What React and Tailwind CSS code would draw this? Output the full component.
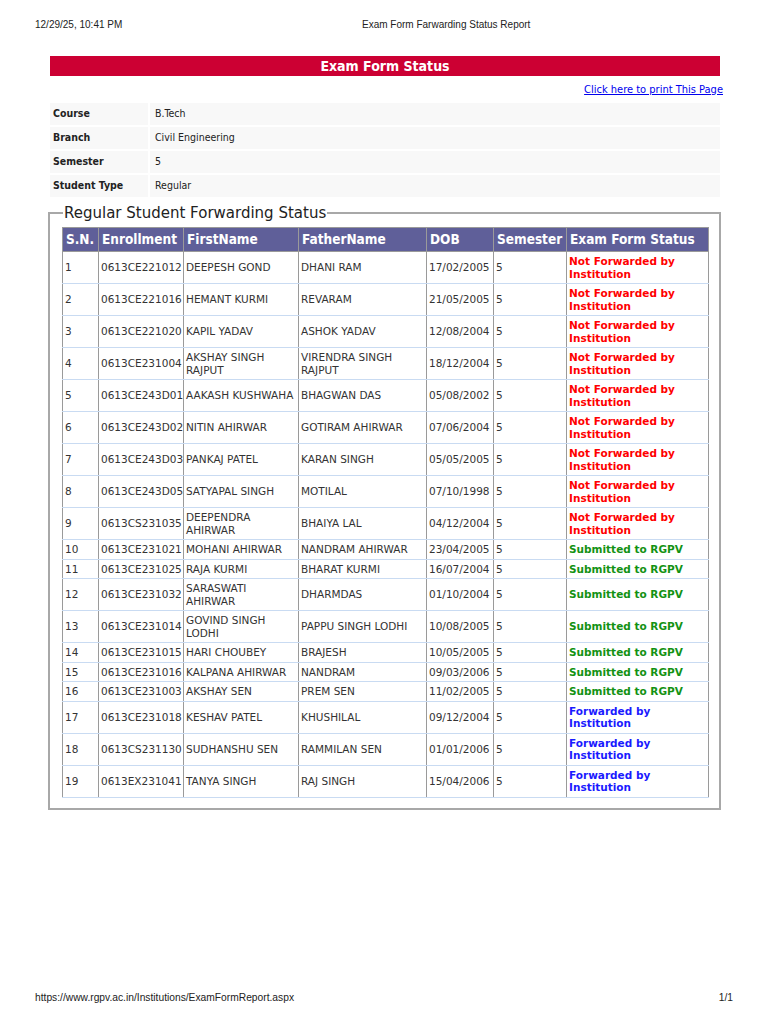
import React from "react";

const rows = [
  ["1", "0613CE221012", "DEEPESH GOND", "DHANI RAM", "17/02/2005", "5", "n"],
  ["2", "0613CE221016", "HEMANT KURMI", "REVARAM", "21/05/2005", "5", "n"],
  ["3", "0613CE221020", "KAPIL YADAV", "ASHOK YADAV", "12/08/2004", "5", "n"],
  ["4", "0613CE231004", "AKSHAY SINGH RAJPUT", "VIRENDRA SINGH RAJPUT", "18/12/2004", "5", "n"],
  ["5", "0613CE243D01", "AAKASH KUSHWAHA", "BHAGWAN DAS", "05/08/2002", "5", "n"],
  ["6", "0613CE243D02", "NITIN AHIRWAR", "GOTIRAM AHIRWAR", "07/06/2004", "5", "n"],
  ["7", "0613CE243D03", "PANKAJ PATEL", "KARAN SINGH", "05/05/2005", "5", "n"],
  ["8", "0613CE243D05", "SATYAPAL SINGH", "MOTILAL", "07/10/1998", "5", "n"],
  ["9", "0613CS231035", "DEEPENDRA AHIRWAR", "BHAIYA LAL", "04/12/2004", "5", "n"],
  ["10", "0613CE231021", "MOHANI AHIRWAR", "NANDRAM AHIRWAR", "23/04/2005", "5", "s"],
  ["11", "0613CE231025", "RAJA KURMI", "BHARAT KURMI", "16/07/2004", "5", "s"],
  ["12", "0613CE231032", "SARASWATI AHIRWAR", "DHARMDAS", "01/10/2004", "5", "s"],
  ["13", "0613CE231014", "GOVIND SINGH LODHI", "PAPPU SINGH LODHI", "10/08/2005", "5", "s"],
  ["14", "0613CE231015", "HARI CHOUBEY", "BRAJESH", "10/05/2005", "5", "s"],
  ["15", "0613CE231016", "KALPANA AHIRWAR", "NANDRAM", "09/03/2006", "5", "s"],
  ["16", "0613CE231003", "AKSHAY SEN", "PREM SEN", "11/02/2005", "5", "s"],
  ["17", "0613CE231018", "KESHAV PATEL", "KHUSHILAL", "09/12/2004", "5", "f"],
  ["18", "0613CS231130", "SUDHANSHU SEN", "RAMMILAN SEN", "01/01/2006", "5", "f"],
  ["19", "0613EX231041", "TANYA SINGH", "RAJ SINGH", "15/04/2006", "5", "f"],
];

const statusText = {
  n: "Not Forwarded by Institution",
  s: "Submitted to RGPV",
  f: "Forwarded by Institution",
};
const statusClass = {
  n: "text-[#ff0000]",
  s: "text-[#139213]",
  f: "text-[#1a1aff]",
};

const info = [
  ["Course", "B.Tech"],
  ["Branch", "Civil Engineering"],
  ["Semester", "5"],
  ["Student Type", "Regular"],
];

const td =
  "border-x border-x-[#9a9a9a] border-y border-y-[#c9dbf2] px-[2px] py-[3px] align-middle";

const cond = { fontFamily: "'DejaVu Sans Condensed', 'DejaVu Sans', sans-serif" };

export default function App() {
  return (
    <div className="flex h-[1024px] flex-col bg-white" style={{ fontFamily: "'DejaVu Sans', Verdana, sans-serif" }}>
      <div
        className="relative flex h-[56px] items-start px-[35px] pt-[17px] text-[10px] text-[#222]"
        style={{ fontFamily: "'Liberation Sans', Arial, sans-serif" }}
      >
        <span>12/29/25, 10:41 PM</span>
        <span className="absolute left-[362px]">Exam Form Farwarding Status Report</span>
      </div>

      <div className="ml-[50px] w-[670px]">
        <div className="flex h-[20px] items-center justify-center bg-[#cc0033] text-[14px] font-bold text-white" style={cond}>
          Exam Form Status
        </div>
        <div className="mr-[-3px] flex justify-end pt-[7px]">
          <a href="#" className="text-[11px] leading-[14px] text-[#0000ee] underline" style={cond}>
            Click here to print This Page
          </a>
        </div>
        <div className="mt-[6px] flex flex-col gap-[2px]" style={cond}>
          {info.map(([k, v]) => (
            <div key={k} className="flex h-[22px] gap-[2px] text-[10.5px] text-[#222]">
              <div className="flex w-[98px] items-center bg-[#f8f8f8] pl-[3px] font-bold">{k}</div>
              <div className="flex flex-1 items-center bg-[#f8f8f8] pl-[5px]">{v}</div>
            </div>
          ))}
        </div>
      </div>

      <fieldset className="ml-[48px] mt-[8px] w-[673px] border-2 border-[#a8a8a8] pb-[10px] pl-[12px] pr-[10px] pt-0">
        <legend className="ml-[1px] px-[1px] text-[15px] leading-[16px] text-[#222]" style={{ fontFamily: "'DejaVu Sans', Verdana, sans-serif" }}>
          Regular Student Forwarding Status
        </legend>
        <table className="mt-[6px] w-[646px] table-fixed border-collapse text-[10.5px] leading-[12.5px] text-[#333]">
          <colgroup>
            <col className="w-[36px]" />
            <col className="w-[85px]" />
            <col className="w-[115px]" />
            <col className="w-[128px]" />
            <col className="w-[67px]" />
            <col className="w-[73px]" />
            <col className="w-[142px]" />
          </colgroup>
          <thead>
            <tr className="h-[24px] bg-[#5f5f99] text-left text-[13.5px] font-bold text-white" style={cond}>
              {["S.N.", "Enrollment", "FirstName", "FatherName", "DOB", "Semester", "Exam Form Status"].map((h) => (
                <th key={h} className="whitespace-nowrap border border-[#9a9a9a] px-[3px] font-bold">
                  {h}
                </th>
              ))}
            </tr>
          </thead>
          <tbody>
            {rows.map((r) => (
              <tr key={r[0]}>
                <td className={td}>{r[0]}</td>
                <td className={td}>{r[1]}</td>
                <td className={td}>{r[2]}</td>
                <td className={td}>{r[3]}</td>
                <td className={td}>{r[4]}</td>
                <td className={td}>{r[5]}</td>
                <td className={`${td} font-bold ${statusClass[r[6]]}`}>{statusText[r[6]]}</td>
              </tr>
            ))}
          </tbody>
        </table>
      </fieldset>

      <div
        className="mt-auto flex h-[34px] items-start justify-between px-[35px] text-[10.25px] text-[#222]"
        style={{ fontFamily: "'Liberation Sans', Arial, sans-serif" }}
      >
        <span>https://www.rgpv.ac.in/Institutions/ExamFormReport.aspx</span>
        <span>1/1</span>
      </div>
    </div>
  );
}
